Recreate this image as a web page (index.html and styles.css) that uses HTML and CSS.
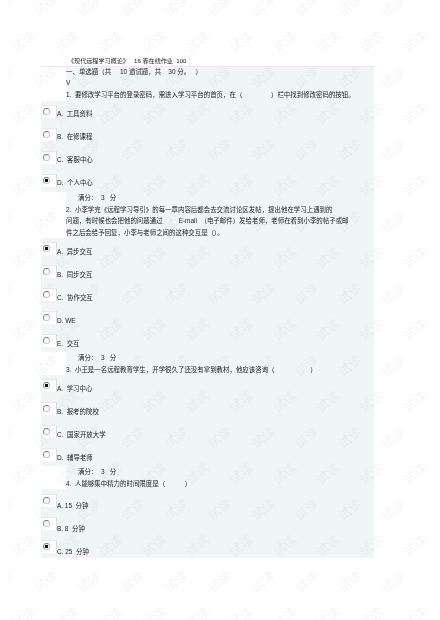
FILE: index.html
```html
<!DOCTYPE html>
<html lang="zh-CN">
<head>
<meta charset="utf-8">
<title>现代远程学习概论</title>
<link rel="stylesheet" href="styles.css">
</head>
<body>
<main class="sheet">
  <h1 class="paper-title">《现代远程学习概论》   16 春在线作业  100</h1>
  <div class="panel">
    <section class="stem stem-first">
      <p class="line line-title">一、单选题（共     10 道试题，共    30 分。   ）</p>
      <p class="line line-v">V</p>
      <p class="line line-q">1.  要修改学习平台的登录密码，需进入学习平台的首页，在（                ）栏中找到修改密码的按钮。</p>
    </section>
    <div class="options options-first">
      <label class="opt"><span class="radio-cell"><input type="radio" name="q1"></span><span class="opt-text">A.  工具资料</span></label>
      <label class="opt"><span class="radio-cell"><input type="radio" name="q1"></span><span class="opt-text">B.  在修课程</span></label>
      <label class="opt"><span class="radio-cell"><input type="radio" name="q1"></span><span class="opt-text">C.  客服中心</span></label>
      <label class="opt"><span class="radio-cell"><input type="radio" name="q1" checked></span><span class="opt-text">D.  个人中心</span></label>
    </div>
    <section class="stem stem-second">
      <p class="score">满分：  3   分</p>
      <p class="line">2.  小李学完《远程学习导引》的每一章内容后都会去交流讨论区发帖，提出他在学习上遇到的</p>
      <p class="line">问题，有时候也会把他的问题通过         E-mail  （电子邮件）发给老师，老师在看到小李的帖子或邮</p>
      <p class="line">件之后会给予回复，小李与老师之间的这种交互是（）。</p>
    </section>
    <div class="options">
      <label class="opt"><span class="radio-cell"><input type="radio" name="q2" checked></span><span class="opt-text">A.  异步交互</span></label>
      <label class="opt"><span class="radio-cell"><input type="radio" name="q2"></span><span class="opt-text">B.  同步交互</span></label>
      <label class="opt"><span class="radio-cell"><input type="radio" name="q2"></span><span class="opt-text">C.  协作交互</span></label>
      <label class="opt"><span class="radio-cell"><input type="radio" name="q2"></span><span class="opt-text">D. WE</span></label>
      <label class="opt"><span class="radio-cell"><input type="radio" name="q2"></span><span class="opt-text">E.  交互</span></label>
    </div>
    <section class="stem stem-third">
      <p class="score">满分：  3   分</p>
      <p class="line">3.  小王是一名远程教育学生，开学很久了还没有拿到教材，他应该咨询（                    ）</p>
    </section>
    <div class="options">
      <label class="opt"><span class="radio-cell"><input type="radio" name="q3" checked></span><span class="opt-text">A.  学习中心</span></label>
      <label class="opt"><span class="radio-cell"><input type="radio" name="q3"></span><span class="opt-text">B.  报考的院校</span></label>
      <label class="opt"><span class="radio-cell"><input type="radio" name="q3"></span><span class="opt-text">C.  国家开放大学</span></label>
      <label class="opt"><span class="radio-cell"><input type="radio" name="q3"></span><span class="opt-text">D.  辅导老师</span></label>
    </div>
    <section class="stem stem-fourth">
      <p class="score">满分：  3   分</p>
      <p class="line">4.  人能够集中精力的时间限度是（           ）</p>
    </section>
    <div class="options options-last">
      <label class="opt"><span class="radio-cell"><input type="radio" name="q4"></span><span class="opt-text">A. 15  分钟</span></label>
      <label class="opt"><span class="radio-cell"><input type="radio" name="q4"></span><span class="opt-text">B. 8  分钟</span></label>
      <label class="opt"><span class="radio-cell"><input type="radio" name="q4" checked></span><span class="opt-text">C. 25  分钟</span></label>
    </div>
  </div>
  <svg class="watermark" width="440" height="620" viewBox="0 0 440 620" aria-hidden="true">
    <defs>
      <pattern id="wm" x="12" y="-13" width="43.5" height="72" patternUnits="userSpaceOnUse">
        <text class="wm-text" transform="translate(33 18) rotate(-38)">试读</text>
        <text class="wm-text" transform="translate(11 54) rotate(-38)">试读</text>
        <text class="wm-text" transform="translate(54.5 54) rotate(-38)">试读</text>
      </pattern>
    </defs>
    <rect x="8" y="0" width="418" height="620" fill="url(#wm)"/>
  </svg>
</main>
</body>
</html>
```
FILE: styles.css
```css
html, body {
  margin: 0;
  padding: 0;
  background: #fff;
}

.sheet {
  position: relative;
  width: 440px;
  height: 620px;
  overflow: hidden;
  padding: 55px 0 0 41px;
  box-sizing: border-box;
  font-family: "Liberation Sans", "Noto Sans CJK SC", sans-serif;
  font-size: 6.45px;
  color: #222;
}

.paper-title {
  margin: 0 0 0 25px;
  padding-left: 2px;
  width: 121px;
  height: 11px;
  font: inherit;
  font-size: 6.1px;
  line-height: 11px;
  white-space: pre;
  border-right: 1px solid #e4e8e8;
  filter: blur(.3px);
}

.panel {
  width: 333px;
  height: 492px;
  background: #f0f5f6;
  border-top: 1px solid #e6eaea;
  box-sizing: border-box;
  filter: blur(.3px);
  overflow: hidden;
}

.stem {
  box-sizing: border-box;
  margin: 0;
  border-left: 25px solid #fff;
  background: #f0f5f6;
}

.stem-first {
  height: 34px;
  margin-bottom: 1px;
}

.stem-second {
  height: 46px;
  margin-bottom: 1px;
}

.stem-third {
  height: 23px;
  margin-bottom: 1px;
}

.stem-fourth {
  height: 23px;
  margin-bottom: 2px;
}

.line, .score {
  margin: 0;
  line-height: 11.5px;
  height: 11.5px;
  white-space: pre;
}

.line-title {
  line-height: 9px;
  height: 9px;
}

.line-v {
  line-height: 12px;
  height: 13px;
  padding-top: 1px;
  box-sizing: border-box;
}

.line-q {
  line-height: 12px;
  height: 12px;
}

.score {
  padding-left: 12px;
}

.opt {
  display: flex;
  align-items: flex-start;
  height: 23px;
}

.opt:last-child {
  height: 21px;
}

.radio-cell {
  display: flex;
  box-sizing: border-box;
  width: 15px;
  height: 13px;
  margin: 3px 0 0 1px;
  padding: 2px 0 0 1px;
  background: #fff;
  border-right: 1px solid #d8dddd;
  border-top: 1px solid #e6eaea;
}

.radio-cell input {
  appearance: none;
  -webkit-appearance: none;
  box-sizing: border-box;
  width: 7px;
  height: 7px;
  margin: 0;
  border-radius: 50%;
  border: 1px solid;
  border-color: #777 #bbb #ccc #888;
  background: #fff;
}

.radio-cell input:checked {
  background: radial-gradient(circle, #111 0 1.5px, #fff 2px);
}

.opt-text {
  margin-top: 8px;
  line-height: 10px;
  white-space: pre;
}

.options-first .opt-text {
  margin-top: 7px;
}

.options-last .opt-text {
  margin-top: 9.5px;
}

.watermark {
  position: absolute;
  left: 0;
  top: 0;
  pointer-events: none;
  filter: blur(.4px);
}

.wm-text {
  font-family: "Noto Sans CJK SC", sans-serif;
  font-size: 13px;
  text-anchor: middle;
  dominant-baseline: central;
  fill: rgba(0, 0, 0, .04);
}
```
